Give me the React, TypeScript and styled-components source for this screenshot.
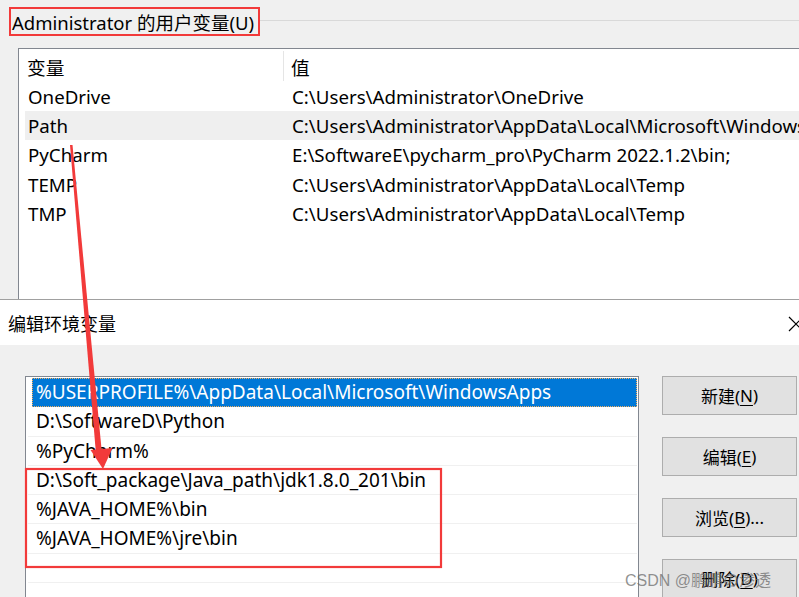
import styled, { createGlobalStyle } from "styled-components";

const GlobalStyle = createGlobalStyle`
	html, body {
		margin: 0;
		padding: 0;
		background: #f0f0f0;
	}
	* {
		box-sizing: border-box;
	}
`;

const FONT = `"Noto Sans", "Noto Sans CJK SC", sans-serif`;

const Page = styled.div`
	position: relative;
	width: 799px;
	height: 597px;
	overflow: hidden;
	display: flex;
	flex-direction: column;
	background: #f0f0f0;
	font-family: ${FONT};
	font-size: 18.7px;
	color: #000;
`;

const UserSection = styled.section`
	height: 299px;
	flex-shrink: 0;
	display: flex;
	flex-direction: column;
	overflow: hidden;
`;

const GroupHeader = styled.div`
	display: flex;
	align-items: center;
	padding: 7px 0 0 9px;
`;

const GroupLabel = styled.div`
	height: 29px;
	display: flex;
	align-items: center;
	padding: 0 4px 0 1px;
	border: 2px solid #f23a3a;
	white-space: nowrap;
	font-size: 18.5px;
`;

const GroupRule = styled.div`
	flex: 1;
	height: 1px;
	margin-bottom: 3px;
	background: #d9d9d9;
`;

const Table = styled.div`
	flex: 1;
	margin: 12px 0 0 18px;
	background: #fff;
	border-left: 1px solid #828790;
	border-top: 1px solid #828790;
`;

const HeaderRow = styled.div`
	display: grid;
	grid-template-columns: 265px 1fr;
	height: 33px;
`;

const HeaderCell = styled.div<{ $divider?: boolean }>`
	display: flex;
	align-items: center;
	padding-left: ${p => (p.$divider ? "8px" : "7px")};
	margin: 2px 0 1px;
	border-right: ${p => (p.$divider ? "1px solid #e5e5e5" : "none")};
`;

const Row = styled.div<{ $hot?: boolean }>`
	display: grid;
	grid-template-columns: 259px 1fr;
	height: 29.2px;
	margin-left: 6px;
	align-items: center;
	background: ${p => (p.$hot ? "#efefef" : "transparent")};
	white-space: nowrap;
`;

const Cell = styled.div<{ $value?: boolean }>`
	padding-left: ${p => (p.$value ? "8px" : "3px")};
	overflow: hidden;
`;

const Dialog = styled.section`
	flex: 1;
	display: flex;
	flex-direction: column;
	border-top: 1px solid #a0a0a0;
	min-height: 0;
`;

const TitleBar = styled.div`
	flex-shrink: 0;
	height: 45px;
	display: flex;
	align-items: center;
	justify-content: space-between;
	padding-left: 8px;
	background: #fff;
	font-size: 18px;
`;

const CloseIcon = styled.svg`
	width: 16px;
	height: 16px;
	margin-right: -5px;
	margin-top: 2px;
`;

const Body = styled.div`
	flex: 1;
	display: flex;
	align-items: flex-start;
	padding: 31px 0 0 25px;
	gap: 23px;
`;

const List = styled.div`
	flex-shrink: 0;
	width: 614px;
	height: 240px;
	padding: 1px 1px 0 2px;
	background: #fff;
	border: 1px solid #828790;
	border-bottom: none;
`;

const Item = styled.div<{ $selected?: boolean }>`
	height: 29.25px;
	display: flex;
	align-items: center;
	padding-left: ${p => (p.$selected ? "4px" : "8px")};
	margin-left: ${p => (p.$selected ? "4px" : "0")};
	border-bottom: 1px solid ${p => (p.$selected ? "transparent" : "#f0f0f0")};
	background: ${p => (p.$selected ? "#0078d7" : "transparent")};
	outline: ${p => (p.$selected ? "1px dotted #f4b060" : "none")};
	outline-offset: -1px;
	color: ${p => (p.$selected ? "#fff" : "#000")};
	white-space: nowrap;
	font-size: 19px;
`;

const Buttons = styled.div`
	flex-shrink: 0;
	display: flex;
	flex-direction: column;
	gap: 22px;
	width: 135px;
`;

const Button = styled.button`
	height: 39px;
	background: #e1e1e1;
	border: 1px solid #adadad;
	font-family: ${FONT};
	font-size: 17px;
	color: #000;
	padding: 0;
	display: flex;
	align-items: center;
	justify-content: center;
	u {
		text-underline-offset: 3px;
	}
`;

const Annotations = styled.svg`
	position: absolute;
	left: 0;
	top: 0;
	pointer-events: none;
`;

const Watermark = styled.div`
	position: absolute;
	left: 625px;
	top: 567px;
	font-family: "Liberation Sans", "Noto Sans CJK SC", sans-serif;
	font-size: 16px;
	color: rgba(110, 110, 110, 0.75);
	white-space: nowrap;
`;

const userVars = [
	["OneDrive", "C:\\Users\\Administrator\\OneDrive"],
	["Path", "C:\\Users\\Administrator\\AppData\\Local\\Microsoft\\WindowsApps;"],
	["PyCharm", "E:\\SoftwareE\\pycharm_pro\\PyCharm 2022.1.2\\bin;"],
	["TEMP", "C:\\Users\\Administrator\\AppData\\Local\\Temp"],
	["TMP", "C:\\Users\\Administrator\\AppData\\Local\\Temp"],
];

const pathItems = [
	"%USERPROFILE%\\AppData\\Local\\Microsoft\\WindowsApps",
	"D:\\SoftwareD\\Python",
	"%PyCharm%",
	"D:\\Soft_package\\Java_path\\jdk1.8.0_201\\bin",
	"%JAVA_HOME%\\bin",
	"%JAVA_HOME%\\jre\\bin",
	"",
	"",
];

const buttons: [string, string, string][] = [
	["新建(", "N", ")"],
	["编辑(", "E", ")"],
	["浏览(", "B", ")..."],
	["删除(", "D", ")"],
];

export default function App() {
	return (
		<>
			<GlobalStyle />
			<Page>
				<UserSection>
					<GroupHeader>
						<GroupLabel>Administrator 的用户变量(U)</GroupLabel>
						<GroupRule />
					</GroupHeader>
					<Table>
						<HeaderRow>
							<HeaderCell $divider>变量</HeaderCell>
							<HeaderCell>值</HeaderCell>
						</HeaderRow>
						{userVars.map(([name, value]) => (
							<Row key={name} $hot={name === "Path"}>
								<Cell>{name}</Cell>
								<Cell $value>{value}</Cell>
							</Row>
						))}
					</Table>
				</UserSection>

				<Dialog>
					<TitleBar>
						编辑环境变量
						<CloseIcon viewBox="0 0 16 16">
							<path d="M1 1L15 15M15 1L1 15" stroke="#000" strokeWidth="1.2" />
						</CloseIcon>
					</TitleBar>
					<Body>
						<List>
							{pathItems.map((item, i) => (
								<Item key={i} $selected={i === 0}>
									{item}
								</Item>
							))}
						</List>
						<Buttons>
							{buttons.map(([pre, key, post]) => (
								<Button key={key}>
									{pre}
									<u>{key}</u>
									{post}
								</Button>
							))}
						</Buttons>
					</Body>
				</Dialog>

				<Annotations width="799" height="597" viewBox="0 0 799 597">
					<polygon
						points="70,145 72.5,145 102,454 96,454"
						fill="#f23a3a"
					/>
					<polygon points="90.5,450 112.5,448 103,469" fill="#f23a3a" />
					<rect
						x="26"
						y="469"
						width="415"
						height="98"
						fill="none"
						stroke="#f23a3a"
						strokeWidth="2.2"
					/>
				</Annotations>
				<Watermark>CSDN @鹏鹏の渗透</Watermark>
			</Page>
		</>
	);
}
